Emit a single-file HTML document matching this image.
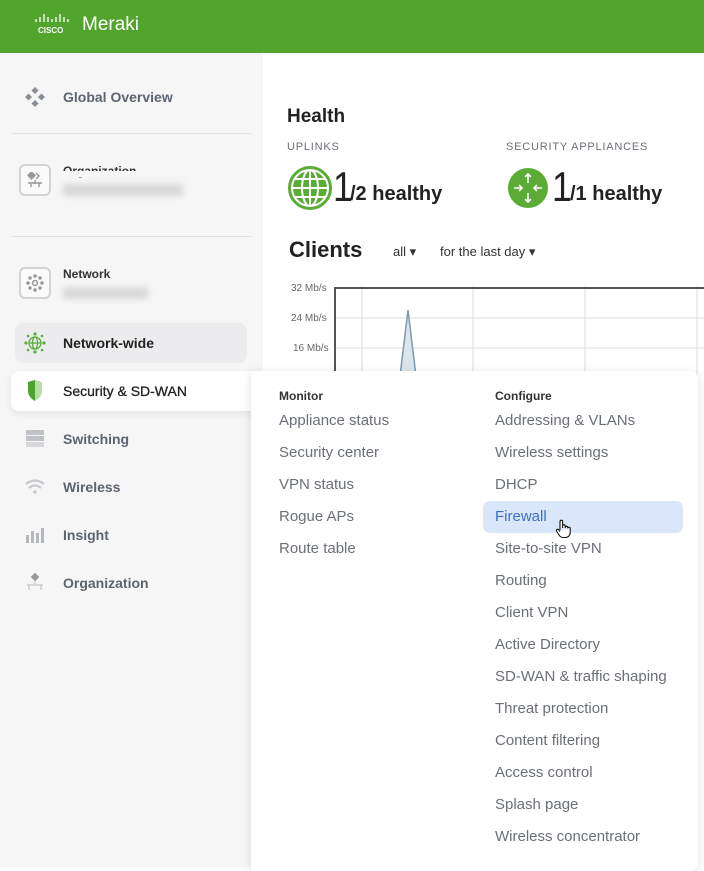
<!DOCTYPE html>
<html><head><style>
*{margin:0;padding:0;box-sizing:border-box}
body{width:704px;height:868px;overflow:hidden;font-family:"Liberation Sans",sans-serif;background:#fff;position:relative}
.hdr{position:absolute;left:0;top:0;width:704px;height:53px;background:#52a52c}
.side{position:absolute;left:0;top:53px;width:263px;height:815px;background:#f6f6f6}
.a{position:absolute}
.nav{position:absolute;left:63px;font-size:14px;font-weight:bold;color:#5d6470}
.hr{position:absolute;left:11px;width:240px;height:1px;background:#e2e2e2}
.box{position:absolute;left:19px;width:32px;height:32px;border:2px solid #d0d3d6;border-radius:6px;background:#fafafa}
.blur{position:absolute;height:12px;background:#d9d9d9;filter:blur(3px)}
.mi{position:absolute;font-size:15px;color:#6b6f76}
</style></head><body>
<div class="hdr">
 <svg class="a" style="left:35px;top:14px" width="38" height="20" viewBox="0 0 38 20"><g stroke="#fff" stroke-width="1.3"><line x1="1" y1="5" x2="1" y2="8"/><line x1="5" y1="3" x2="5" y2="8"/><line x1="9" y1="0" x2="9" y2="8"/><line x1="13" y1="3" x2="13" y2="8"/><line x1="17" y1="5" x2="17" y2="8"/><line x1="21" y1="3" x2="21" y2="8"/><line x1="25" y1="0" x2="25" y2="8"/><line x1="29" y1="3" x2="29" y2="8"/><line x1="33" y1="5" x2="33" y2="8"/></g><text x="3" y="19" fill="#fff" font-size="8" font-weight="bold" font-family="Liberation Sans">CISCO</text></svg>
 <div class="a" style="left:82px;top:14px;font-size:19px;color:#fff">Meraki</div>
</div>
<div class="side"></div>
<svg class="a" style="left:25px;top:87px" width="20" height="20" viewBox="0 0 20 20" fill="#8a8f96"><rect x="7.5" y="1" width="5" height="5" transform="rotate(45 10 3.5)"/><rect x="7.5" y="14" width="5" height="5" transform="rotate(45 10 16.5)"/><rect x="1" y="7.5" width="5" height="5" transform="rotate(45 3.5 10)"/><rect x="14" y="7.5" width="5" height="5" transform="rotate(45 16.5 10)"/></svg>
<div class="nav" style="top:89px">Global Overview</div>
<div class="hr" style="top:133px"></div>
<div class="box" style="top:164px"></div>
<svg class="a" style="left:27px;top:172px" width="16" height="16" viewBox="0 0 16 16" fill="none" stroke="#999" stroke-width="1.4"><rect x="2" y="1" width="5" height="5" fill="#999" transform="rotate(45 4.5 3.5)"/><path d="M9 1l3 3-3 3M1 11h14M4 11v4M12 11v4M8 8v4"/></svg>
<div class="a" style="left:63px;top:164px;font-size:12px;font-weight:bold;color:#333">Organization</div>
<div class="blur" style="left:62px;top:171px;width:80px;height:6px;background:#f6f6f6;filter:none"></div>
<div class="blur" style="left:63px;top:184px;width:120px"></div>
<div class="hr" style="top:236px"></div>
<div class="box" style="top:267px"></div>
<svg class="a" style="left:26px;top:274px" width="18" height="18" viewBox="0 0 18 18" fill="#999" stroke="#999"><circle cx="9" cy="9" r="2.5" fill="none" stroke-width="1.5"/><circle cx="9" cy="2" r="1.3"/><circle cx="9" cy="16" r="1.3"/><circle cx="2" cy="9" r="1.3"/><circle cx="16" cy="9" r="1.3"/><circle cx="4" cy="4" r="1.2"/><circle cx="14" cy="4" r="1.2"/><circle cx="4" cy="14" r="1.2"/><circle cx="14" cy="14" r="1.2"/></svg>
<div class="a" style="left:63px;top:267px;font-size:12px;font-weight:bold;color:#333">Network</div>
<div class="blur" style="left:63px;top:287px;width:85px"></div>
<div class="a" style="left:15px;top:323px;width:232px;height:40px;background:#ececee;border-radius:8px"></div>
<svg class="a" style="left:24px;top:332px" width="22" height="22" viewBox="0 0 22 22" fill="none" stroke="#5aac35" stroke-width="1.3"><circle cx="11" cy="11" r="6"/><ellipse cx="11" cy="11" rx="2.5" ry="6"/><line x1="5" y1="11" x2="17" y2="11"/><g fill="#5aac35" stroke="none"><circle cx="11" cy="2" r="1.6"/><circle cx="11" cy="20" r="1.6"/><circle cx="2" cy="11" r="1.6"/><circle cx="20" cy="11" r="1.6"/><circle cx="4" cy="4" r="1.3"/><circle cx="18" cy="4" r="1.3"/><circle cx="4" cy="18" r="1.3"/><circle cx="18" cy="18" r="1.3"/></g></svg>
<div class="nav" style="top:335px;color:#222">Network-wide</div>
<div class="a" style="left:11px;top:371px;width:250px;height:40px;background:#fff;border-radius:8px 0 0 8px;box-shadow:0 3px 8px rgba(0,0,0,.08)"></div>
<svg class="a" style="left:27px;top:380px" width="16" height="21" viewBox="0 0 16 21"><path d="M1 2Q4 1 8 0V21Q1 17 1 11Z" fill="#4fa22c"/><path d="M8 0Q12 1 15 2V11Q15 17 8 21Z" fill="#b8dea5"/></svg>
<div class="nav" style="top:383px;color:#222;font-weight:normal;-webkit-text-stroke:.3px #222">Security &amp; SD-WAN</div>
<svg class="a" style="left:26px;top:430px" width="18" height="18" viewBox="0 0 18 18" fill="#bfc2c6"><rect y="0" width="18" height="5"/><rect y="6" width="18" height="5"/><rect y="12" width="18" height="5" fill="#d5d7da"/></svg>
<div class="nav" style="top:431px">Switching</div>
<svg class="a" style="left:24px;top:479px" width="22" height="16" viewBox="0 0 22 16" fill="none" stroke="#c4c7cb" stroke-width="2.2"><path d="M2 5Q11 -2 20 5M5 9Q11 4 17 9"/><circle cx="11" cy="13" r="1.8" fill="#c4c7cb" stroke="none"/></svg>
<div class="nav" style="top:479px">Wireless</div>
<svg class="a" style="left:26px;top:527px" width="18" height="16" viewBox="0 0 18 16" fill="#b4b7bb"><rect x="0" y="8" width="3" height="8"/><rect x="5" y="4" width="3" height="12"/><rect x="10" y="6" width="3" height="10"/><rect x="15" y="1" width="3" height="15"/></svg>
<div class="nav" style="top:527px">Insight</div>
<svg class="a" style="left:26px;top:573px" width="18" height="18" viewBox="0 0 18 18" fill="#999" stroke="#c4c7cb" stroke-width="1.3"><rect x="6" y="1" width="6" height="6" stroke="none" fill="#999" transform="rotate(45 9 4)"/><path d="M9 8v4M1 12h16M3 12v5M15 12v5" fill="none"/></svg>
<div class="nav" style="top:575px">Organization</div>

<!-- main -->
<div class="a" style="left:287px;top:106px;font-size:19px;font-weight:bold;color:#222">Health</div>
<div class="a" style="left:287px;top:141px;font-size:11px;color:#6b6f76;letter-spacing:.8px">UPLINKS</div>
<div class="a" style="left:506px;top:141px;font-size:11px;color:#6b6f76;letter-spacing:.8px">SECURITY APPLIANCES</div>
<svg class="a" style="left:288px;top:166px" width="44" height="44" viewBox="0 0 44 44" fill="none" stroke="#fff" stroke-width="2"><circle cx="22" cy="22" r="21" fill="#5aac35" stroke="#5aac35"/><circle cx="22" cy="22" r="18"/><ellipse cx="22" cy="22" rx="8" ry="18"/><line x1="22" y1="4" x2="22" y2="40"/><line x1="4" y1="22" x2="40" y2="22"/><line x1="7" y1="13" x2="37" y2="13"/><line x1="7" y1="31" x2="37" y2="31"/></svg>
<div class="a" style="left:333px;top:163px;font-size:42px;color:#222;line-height:48px;transform:scaleX(.85);transform-origin:left">1</div>
<div class="a" style="left:350px;top:183px;font-size:20px;color:#222;font-weight:bold">/2 healthy</div>
<svg class="a" style="left:508px;top:168px" width="40" height="40" viewBox="0 0 40 40" fill="none" stroke="#fff" stroke-width="1.6"><circle cx="20" cy="20" r="20" fill="#5aac35" stroke="none"/><path d="M20 6v9M17 9l3-3 3 3M20 34v-9M17 31l3 3 3-3M6 20h8M11 17l3 3-3 3M34 20h-8M29 17l-3 3 3 3"/></svg>
<div class="a" style="left:552px;top:163px;font-size:42px;color:#222;line-height:48px;transform:scaleX(.85);transform-origin:left">1</div>
<div class="a" style="left:570px;top:183px;font-size:20px;color:#222;font-weight:bold">/1 healthy</div>
<div class="a" style="left:289px;top:237px;font-size:22px;font-weight:bold;color:#222">Clients</div>
<div class="a" style="left:393px;top:244px;font-size:13px;color:#333">all ▾</div>
<div class="a" style="left:440px;top:244px;font-size:13px;color:#333">for the last day ▾</div>
<div class="a" style="left:291px;top:283px;font-size:10px;color:#666">32 Mb/s</div>
<div class="a" style="left:291px;top:313px;font-size:10px;color:#666">24 Mb/s</div>
<div class="a" style="left:293px;top:343px;font-size:10px;color:#666">16 Mb/s</div>
<svg class="a" style="left:334px;top:286px" width="370" height="140"><g stroke="#ddd"><line x1="28" y1="0" x2="28" y2="140"/><line x1="139" y1="0" x2="139" y2="140"/><line x1="251" y1="0" x2="251" y2="140"/><line x1="363" y1="0" x2="363" y2="140"/><line x1="0" y1="32" x2="370" y2="32"/><line x1="0" y1="62" x2="370" y2="62"/></g><path d="M1 140V2H370" fill="none" stroke="#555" stroke-width="2"/><path d="M60 140L74 24 88 140" fill="#dbe5ec" stroke="#7a9cb3" stroke-width="1.5"/></svg>

<!-- dropdown -->
<div class="a" style="left:251px;top:371px;width:447px;height:500px;background:#fff;border-radius:0 8px 8px 0;box-shadow:0 2px 10px rgba(0,0,0,.12)"></div>
<div class="a" style="left:279px;top:389px;font-size:12px;font-weight:bold;color:#333">Monitor</div>
<div class="a" style="left:495px;top:389px;font-size:12px;font-weight:bold;color:#333">Configure</div>
<div class="mi" style="left:279px;top:412px">Appliance status</div>
<div class="mi" style="left:279px;top:444px">Security center</div>
<div class="mi" style="left:279px;top:476px">VPN status</div>
<div class="mi" style="left:279px;top:508px">Rogue APs</div>
<div class="mi" style="left:279px;top:540px">Route table</div>
<div class="a" style="left:483px;top:501px;width:200px;height:32px;background:#dae7fb;border-radius:7px"></div>
<div class="mi" style="left:495px;top:412px">Addressing &amp; VLANs</div>
<div class="mi" style="left:495px;top:444px">Wireless settings</div>
<div class="mi" style="left:495px;top:476px">DHCP</div>
<div class="mi" style="left:495px;top:508px;color:#3a6fd0">Firewall</div>
<svg class="a" style="left:555px;top:519px" width="16" height="20" viewBox="0 0 16 20"><path d="M5 11V2.5a1.3 1.3 0 0 1 2.6 0V9M7.6 8V7a1.3 1.3 0 0 1 2.6 0v2M10.2 8.5a1.3 1.3 0 0 1 2.6 0v1M12.8 9.5a1.2 1.2 0 0 1 2.4 0v4c0 3-2 5-5 5H8c-2 0-3-1-4-2.5L1.5 12a1.2 1.2 0 0 1 2-1.3L5 12.5" fill="#fff" stroke="#111" stroke-width="1.1"/></svg>
<div class="mi" style="left:495px;top:540px">Site-to-site VPN</div>
<div class="mi" style="left:495px;top:572px">Routing</div>
<div class="mi" style="left:495px;top:604px">Client VPN</div>
<div class="mi" style="left:495px;top:636px">Active Directory</div>
<div class="mi" style="left:495px;top:668px">SD-WAN &amp; traffic shaping</div>
<div class="mi" style="left:495px;top:700px">Threat protection</div>
<div class="mi" style="left:495px;top:732px">Content filtering</div>
<div class="mi" style="left:495px;top:764px">Access control</div>
<div class="mi" style="left:495px;top:796px">Splash page</div>
<div class="mi" style="left:495px;top:828px">Wireless concentrator</div>
</body></html>
